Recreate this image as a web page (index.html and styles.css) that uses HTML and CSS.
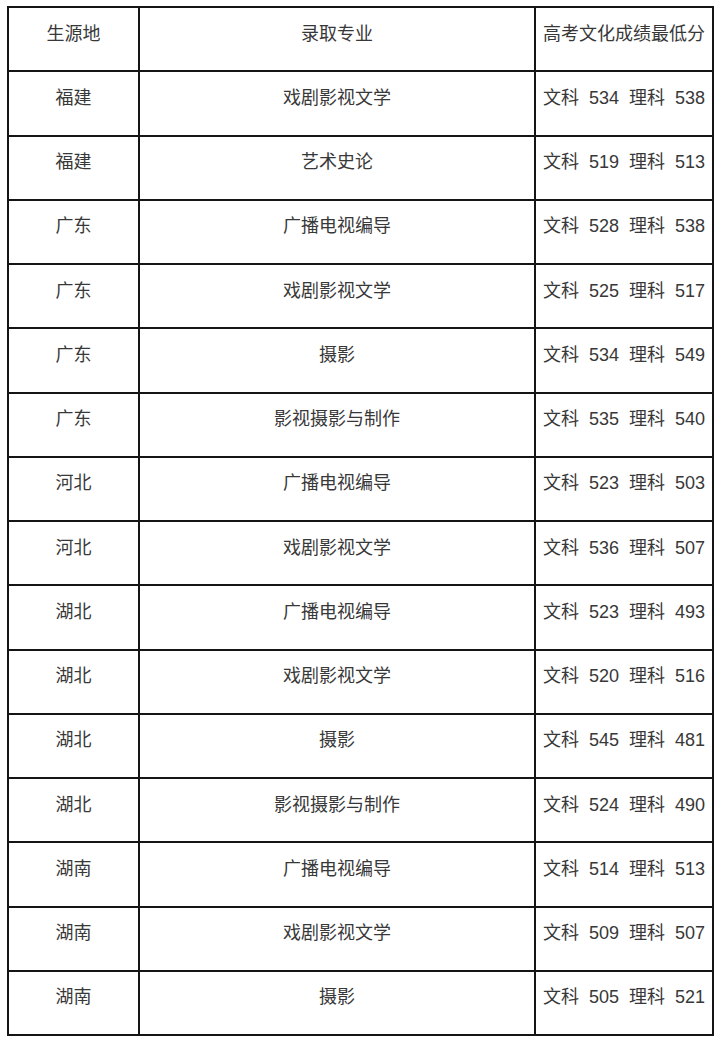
FILE: index.html
```html
<!DOCTYPE html>
<html lang="zh">
<head>
<meta charset="utf-8">
<link rel="stylesheet" href="styles.css">
</head>
<body>
<div class="table">
  <div class="cell">生源地</div><div class="cell">录取专业</div><div class="cell">高考文化成绩最低分</div>
  <div class="cell">福建</div><div class="cell">戏剧影视文学</div><div class="cell score">文科 534 理科 538</div>
  <div class="cell">福建</div><div class="cell">艺术史论</div><div class="cell score">文科 519 理科 513</div>
  <div class="cell">广东</div><div class="cell">广播电视编导</div><div class="cell score">文科 528 理科 538</div>
  <div class="cell">广东</div><div class="cell">戏剧影视文学</div><div class="cell score">文科 525 理科 517</div>
  <div class="cell">广东</div><div class="cell">摄影</div><div class="cell score">文科 534 理科 549</div>
  <div class="cell">广东</div><div class="cell">影视摄影与制作</div><div class="cell score">文科 535 理科 540</div>
  <div class="cell">河北</div><div class="cell">广播电视编导</div><div class="cell score">文科 523 理科 503</div>
  <div class="cell">河北</div><div class="cell">戏剧影视文学</div><div class="cell score">文科 536 理科 507</div>
  <div class="cell">湖北</div><div class="cell">广播电视编导</div><div class="cell score">文科 523 理科 493</div>
  <div class="cell">湖北</div><div class="cell">戏剧影视文学</div><div class="cell score">文科 520 理科 516</div>
  <div class="cell">湖北</div><div class="cell">摄影</div><div class="cell score">文科 545 理科 481</div>
  <div class="cell">湖北</div><div class="cell">影视摄影与制作</div><div class="cell score">文科 524 理科 490</div>
  <div class="cell">湖南</div><div class="cell">广播电视编导</div><div class="cell score">文科 514 理科 513</div>
  <div class="cell">湖南</div><div class="cell">戏剧影视文学</div><div class="cell score">文科 509 理科 507</div>
  <div class="cell">湖南</div><div class="cell">摄影</div><div class="cell score">文科 505 理科 521</div>
</div>
</body>
</html>
```
FILE: styles.css
```css
html, body {
  margin: 0;
  padding: 0;
  background: #ffffff;
}
body {
  padding: 6px 0 0 7px;
  font-family: "Liberation Sans", "Noto Sans CJK SC", sans-serif;
  color: #383838;
}
.table {
  width: 707px;
  height: 1030px;
  box-sizing: border-box;
  padding: 2px;
  background: #151515;
  display: grid;
  grid-template-columns: 129px 394px 176px;
  grid-template-rows: repeat(16, 1fr);
  gap: 2px;
}
.cell {
  background: #ffffff;
  display: flex;
  align-items: center;
  justify-content: center;
  font-size: 18px;
  line-height: 1;
  padding-bottom: 11px;
  box-sizing: border-box;
  white-space: pre;
}
.score {
  word-spacing: 5px;
}
```
